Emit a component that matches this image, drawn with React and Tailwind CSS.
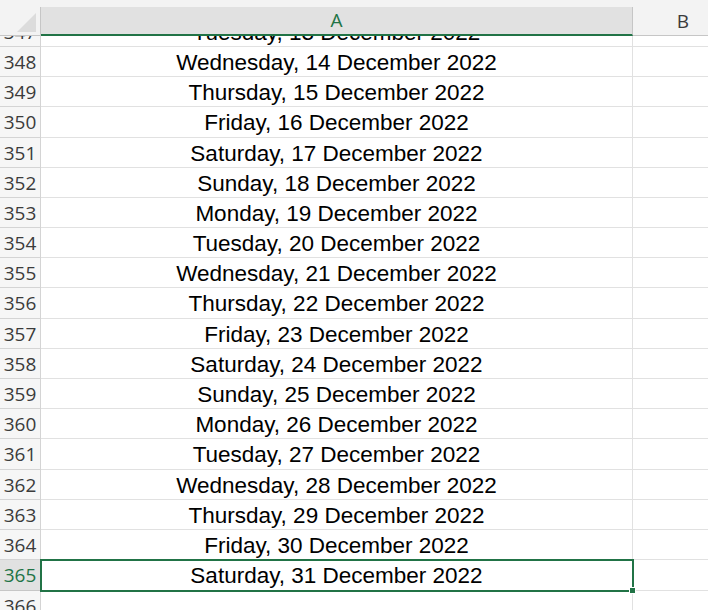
const rows = [
  { n: 348, text: 'Wednesday, 14 December 2022', h: 'h-[30px]' },
  { n: 349, text: 'Thursday, 15 December 2022', h: 'h-[30px]' },
  { n: 350, text: 'Friday, 16 December 2022', h: 'h-[31px]' },
  { n: 351, text: 'Saturday, 17 December 2022', h: 'h-[30px]' },
  { n: 352, text: 'Sunday, 18 December 2022', h: 'h-[30px]' },
  { n: 353, text: 'Monday, 19 December 2022', h: 'h-[30px]' },
  { n: 354, text: 'Tuesday, 20 December 2022', h: 'h-[30px]' },
  { n: 355, text: 'Wednesday, 21 December 2022', h: 'h-[30px]' },
  { n: 356, text: 'Thursday, 22 December 2022', h: 'h-[31px]' },
  { n: 357, text: 'Friday, 23 December 2022', h: 'h-[30px]' },
  { n: 358, text: 'Saturday, 24 December 2022', h: 'h-[30px]' },
  { n: 359, text: 'Sunday, 25 December 2022', h: 'h-[30px]' },
  { n: 360, text: 'Monday, 26 December 2022', h: 'h-[30px]' },
  { n: 361, text: 'Tuesday, 27 December 2022', h: 'h-[31px]' },
  { n: 362, text: 'Wednesday, 28 December 2022', h: 'h-[30px]' },
  { n: 363, text: 'Thursday, 29 December 2022', h: 'h-[30px]' },
  { n: 364, text: 'Friday, 30 December 2022', h: 'h-[30px]' },
  { n: 365, text: 'Saturday, 31 December 2022', h: 'h-[31px]', selected: true },
  { n: 366, text: '', h: 'h-[30px]' },
];

const numFont = { fontFamily: '"Open Sans", "Noto Sans", sans-serif' };
const cellFont = { fontFamily: '"Liberation Sans", Arial, sans-serif' };

const Row = ({ n, text, h, selected }) => (
  <div className={`flex shrink-0 ${h}`}>
    <div
      style={numFont}
      className={
        selected
          ? 'w-[41px] shrink-0 flex items-center justify-center pt-[1px] border-r border-b border-[#c6c6c6] bg-[#e1e1e1] text-[19px] text-[#217346]'
          : 'w-[41px] shrink-0 flex items-center justify-center pt-[1px] border-r border-b border-[#d4d4d4] bg-[#f6f6f6] text-[19px] text-[#3b3b3b]'
      }
    >
      {n}
    </div>
    <div
      style={cellFont}
      className={`relative w-[592px] shrink-0 flex items-center justify-center pt-[2px] border-r border-b border-[#e1e1e1] bg-white text-[22.5px] text-black ${selected ? 'z-10' : ''}`}
    >
      {text}
      {selected && (
        <div className="absolute -left-[1px] -top-[1px] -right-[2px] -bottom-[2px] border-2 border-[#217346]">
          <div className="absolute -right-[4px] -bottom-[4px] w-[7px] h-[7px] bg-[#217346] border border-white" />
        </div>
      )}
    </div>
    <div className="w-[100px] shrink-0 border-r border-b border-[#e1e1e1] bg-white" />
  </div>
);

export default function App() {
  return (
    <div className="w-[708px] h-[610px] overflow-hidden bg-white flex flex-col">
      {/* strip above the column headers */}
      <div className="h-[7px] shrink-0 bg-[#f3f3f3]" />

      {/* column headers */}
      <div className="relative z-20 flex h-[29px] shrink-0" style={numFont}>
        <div className="w-[41px] shrink-0 bg-[#f3f3f3] border-r border-b border-[#c6c6c6] flex items-end justify-end pr-[4px] pb-[3px]">
          <svg width="19" height="19" viewBox="0 0 19 19">
            <polygon points="19,0 19,19 0,19" fill="#dcdcdc" />
          </svg>
        </div>
        <div className="w-[592px] shrink-0 bg-[#e1e1e1] border-r border-[#c6c6c6] border-b-2 border-b-[#217346] flex items-center justify-center text-[19px] text-[#217346]">
          A
        </div>
        <div className="w-[100px] shrink-0 bg-[#f3f3f3] border-b border-[#c6c6c6] flex items-center justify-center text-[19px] text-[#3b3b3b]">
          B
        </div>
      </div>

      {/* partially hidden row 347 */}
      <div className="h-[11px] shrink-0 overflow-hidden flex flex-col justify-end">
        <Row n={347} text="Tuesday, 13 December 2022" h="h-[30px]" />
      </div>

      {rows.map((r) => (
        <Row key={r.n} {...r} />
      ))}
    </div>
  );
}
